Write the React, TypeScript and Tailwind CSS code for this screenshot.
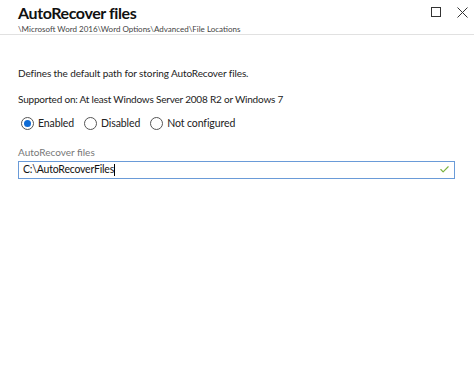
import { Check } from "lucide-react";

const font = { fontFamily: 'Lato, "Noto Sans", sans-serif' };

function Radio({ label, checked }: { label: string; checked?: boolean }) {
  return (
    <label className="flex items-center gap-[4px] mr-[10px]">
      <span className="w-[13px] h-[13px] rounded-full border border-[#555] flex items-center justify-center bg-white">
        {checked && <span className="w-[7px] h-[7px] rounded-full bg-[#0f6cd6]" />}
      </span>
      <span className="text-[10.5px] tracking-[-0.1px] text-[#222]">{label}</span>
    </label>
  );
}

export default function App() {
  return (
    <div className="w-[474px] h-[391px] bg-white overflow-hidden" style={font}>
      {/* Header */}
      <div className="flex justify-between border-b border-[#e1e1e1] h-[35px] pl-[18px] pr-[6px]">
        <div className="flex flex-col">
          <span className="text-[16px] font-bold tracking-[-0.4px] text-[#111] leading-[20px] mt-[3px]">
            AutoRecover files
          </span>
          <span className="text-[8px] text-[#444] leading-[10px] mt-[1px]">
            \Microsoft Word 2016\Word Options\Advanced\File Locations
          </span>
        </div>
        <div className="flex gap-[16px] pt-[6px]">
          <span className="w-[10px] h-[10px] border border-[#333] mt-[1px]" />
          <svg width="11" height="11" viewBox="0 0 11 11" className="mt-[1px]">
            <path d="M0.5 0.5 L10.5 10.5 M10.5 0.5 L0.5 10.5" stroke="#333" strokeWidth="1" />
          </svg>
        </div>
      </div>

      {/* Body */}
      <div className="px-[18px] pt-[31px] text-[#222]">
        <p className="text-[10px] tracking-[-0.1px] leading-[14px]">
          Defines the default path for storing AutoRecover files.
        </p>
        <p className="text-[10px] tracking-[-0.2px] leading-[14px] mt-[12px]">
          Supported on: At least Windows Server 2008 R2 or Windows 7
        </p>
        <div className="flex items-center mt-[10px] ml-[3px]">
          <Radio label="Enabled" checked />
          <Radio label="Disabled" />
          <Radio label="Not configured" />
        </div>

        <div className="mt-[14px] text-[10px] text-[#777] leading-[12px]">AutoRecover files</div>
        <div className="mt-[3px] w-[437px] h-[18px] border border-[#6a9bd8] flex items-center justify-between pl-[4px] pr-[4px]">
          <span className="text-[10.5px] tracking-[-0.2px] text-[#111]">
            C:\AutoRecoverFiles<span className="inline-block w-px h-[12px] bg-black align-middle" />
          </span>
          <Check size={11} color="#7cb342" strokeWidth={2.5} />
        </div>
      </div>
    </div>
  );
}
